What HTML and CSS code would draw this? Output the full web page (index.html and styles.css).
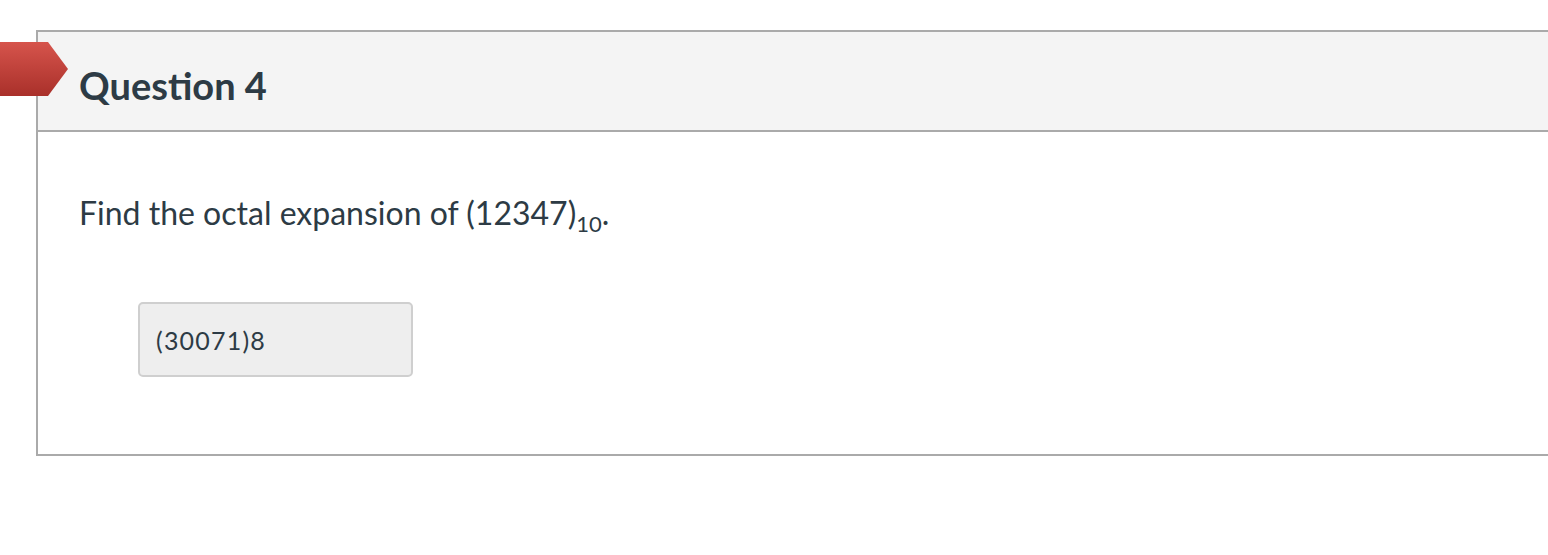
FILE: index.html
```html
<!DOCTYPE html>
<html>
<head>
<meta charset="utf-8">
<link rel="stylesheet" href="styles.css">
</head>
<body>
<div class="page">
  <div class="question">
    <div class="flag"></div>
    <div class="header">
      <h2 class="name">Question 4</h2>
    </div>
    <div class="content">
      <p class="text">Find the octal expansion of (12347)<sub>10</sub>.</p>
      <div class="answer">
        <div class="answer-box">(30071)8</div>
      </div>
    </div>
  </div>
</div>
</body>
</html>
```

FILE: styles.css
```css
html, body {
  margin: 0;
  padding: 0;
  background: #ffffff;
  overflow: hidden;
}
body {
  font-family: Lato, "Noto Sans", sans-serif;
  color: #2d3b45;
}
.page {
  padding-top: 30px;
  padding-left: 36px;
}
.question {
  position: relative;
  width: 1540px;
  border: 2px solid #aaaaaa;
}
.flag {
  position: absolute;
  left: -38px;
  top: 10px;
  width: 69px;
  height: 54px;
  background: linear-gradient(#d6544c, #a9302a);
  clip-path: polygon(0 0, 48px 0, 68px 27px, 48px 54px, 0 54px);
}
.header {
  background: #f4f4f4;
  border-bottom: 2px solid #aaaaaa;
  height: 98px;
  display: flex;
  align-items: center;
  padding-left: 41px;
}
.name {
  margin: 0;
  padding-top: 8px;
  font-size: 38px;
  line-height: 44px;
  font-weight: 700;
  color: #2d3b45;
}
.content {
  padding: 62px 41px 77px;
}
.text {
  margin: 0;
  font-size: 32px;
  line-height: 38px;
}
.text sub {
  font-size: 22px;
  vertical-align: -7px;
  line-height: 0;
}
.answer {
  padding-left: 59px;
  margin-top: 70px;
}
.answer-box {
  width: 249px;
  height: 55px;
  background: #eeeeee;
  border: 2px solid #cfcfcf;
  border-radius: 5px;
  padding: 8px 6px 8px 16px;
  display: flex;
  align-items: center;
  font-size: 25px;
  letter-spacing: 1.2px;
  color: #2d3b45;
  box-sizing: content-box;
}
```
